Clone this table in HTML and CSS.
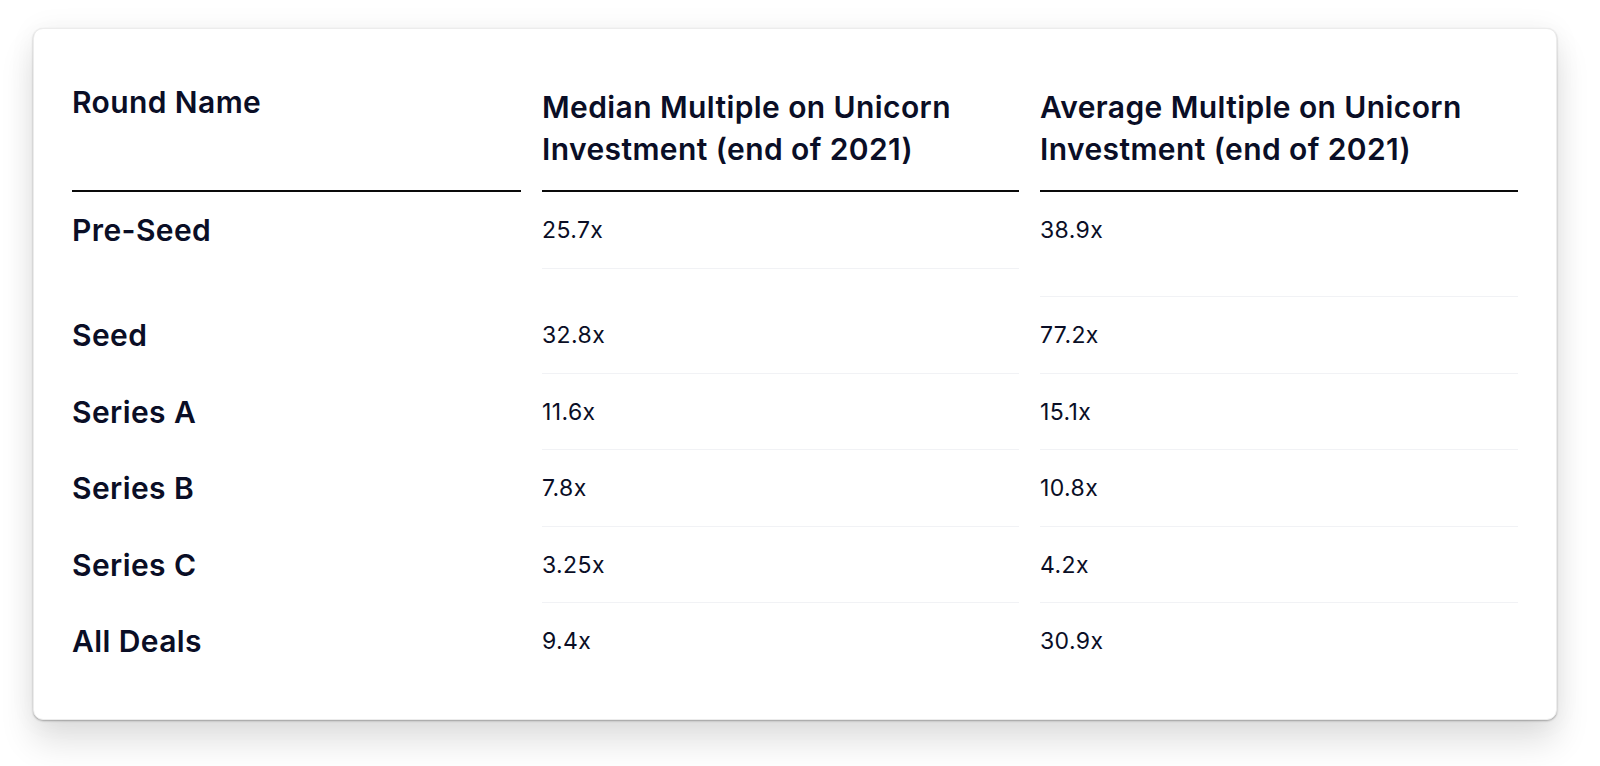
FILE: index.html
```html
<!DOCTYPE html>
<html lang="en">
<head>
<meta charset="utf-8">
<title>Unicorn Investment Multiples</title>
<link rel="stylesheet" href="styles.css">
</head>
<body>
<div class="page">
  <div class="card">
    <div class="table">
      <div class="th th-first">Round Name</div>
      <div class="th">Median Multiple on Unicorn Investment (end of 2021)</div>
      <div class="th">Average Multiple on Unicorn Investment (end of 2021)</div>

      <div class="td label">Pre-Seed</div>
      <div class="td val">25.7x</div>
      <div class="td val tall">38.9x</div>

      <div class="td label">Seed</div>
      <div class="td val">32.8x</div>
      <div class="td val">77.2x</div>

      <div class="td label">Series A</div>
      <div class="td val">11.6x</div>
      <div class="td val">15.1x</div>

      <div class="td label">Series B</div>
      <div class="td val">7.8x</div>
      <div class="td val">10.8x</div>

      <div class="td label">Series C</div>
      <div class="td val">3.25x</div>
      <div class="td val">4.2x</div>

      <div class="td label last">All Deals</div>
      <div class="td val last">9.4x</div>
      <div class="td val last">30.9x</div>
    </div>
  </div>
</div>
</body>
</html>
```

FILE: styles.css
```css
html, body {
  margin: 0;
  padding: 0;
  background: #ffffff;
}

body {
  font-family: Inter, "Noto Sans", "Liberation Sans", sans-serif;
  color: #0a0e26;
  min-height: 100vh;
}

.page {
  box-sizing: border-box;
  min-height: 766px;
  padding: 28px 43px 0 33px;
}

.card {
  box-sizing: border-box;
  width: 1524px;
  background: #ffffff;
  border: 1px solid #ececec;
  border-radius: 10px;
  box-shadow: 0 1px 2px rgba(0, 0, 0, 0.3), 0 22px 34px rgba(0, 0, 0, 0.12), 0 0 28px rgba(0, 0, 0, 0.05);
  padding: 52px 38px 39px 38px;
}

.table {
  display: grid;
  grid-template-columns: 449fr 477fr 478fr;
  column-gap: 21px;
  align-items: start;
}

.th {
  align-self: stretch;
  font-size: 30px;
  line-height: 42px;
  font-weight: 600;
  letter-spacing: 0.4px;
  padding: 5px 0 20px 0;
  border-bottom: 2px solid #0a0a0a;
}

.th-first {
  padding-top: 0;
}

.td {
  line-height: 42px;
  padding: 17px 0 16.5px 0;
  border-bottom: 1px solid #f1f2f5;
}

.label {
  font-size: 30px;
  font-weight: 600;
  letter-spacing: 0.4px;
  border-bottom-color: transparent;
}

.val {
  font-size: 23px;
  font-weight: 400;
  letter-spacing: 0.4px;
}

.tall {
  padding-bottom: 45px;
}

.last {
  border-bottom-color: transparent;
}
```
